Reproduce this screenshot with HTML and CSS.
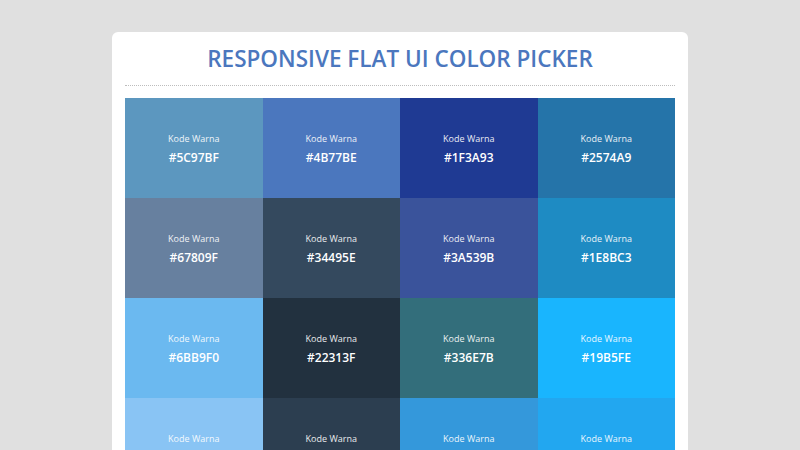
FILE: index.html
```html
<!DOCTYPE html>
<html lang="en">

<head>
    <meta charset="UTF-8">
    <meta name="viewport" content="width=device-width, initial-scale=1.0">
    <title>Flat UI Color Picker</title>

    <link rel="stylesheet" href="styles.css">

</head>

<body>
    <main class="card">
        <h1>Responsive Flat UI Color Picker</h1>

        <div class="colors">
            <div class="color c-5c97bf"><p class="label">Kode Warna</p><p class="hex">#5C97BF</p></div>
            <div class="color c-4b77be"><p class="label">Kode Warna</p><p class="hex">#4B77BE</p></div>
            <div class="color c-1f3a93"><p class="label">Kode Warna</p><p class="hex">#1F3A93</p></div>
            <div class="color c-2574a9"><p class="label">Kode Warna</p><p class="hex">#2574A9</p></div>

            <div class="color c-67809f"><p class="label">Kode Warna</p><p class="hex">#67809F</p></div>
            <div class="color c-34495e"><p class="label">Kode Warna</p><p class="hex">#34495E</p></div>
            <div class="color c-3a539b"><p class="label">Kode Warna</p><p class="hex">#3A539B</p></div>
            <div class="color c-1e8bc3"><p class="label">Kode Warna</p><p class="hex">#1E8BC3</p></div>

            <div class="color c-6bb9f0"><p class="label">Kode Warna</p><p class="hex">#6BB9F0</p></div>
            <div class="color c-22313f"><p class="label">Kode Warna</p><p class="hex">#22313F</p></div>
            <div class="color c-336e7b"><p class="label">Kode Warna</p><p class="hex">#336E7B</p></div>
            <div class="color c-19b5fe"><p class="label">Kode Warna</p><p class="hex">#19B5FE</p></div>

            <div class="color c-89c4f4"><p class="label">Kode Warna</p><p class="hex">#89C4F4</p></div>
            <div class="color c-2c3e50"><p class="label">Kode Warna</p><p class="hex">#2C3E50</p></div>
            <div class="color c-3498db"><p class="label">Kode Warna</p><p class="hex">#3498DB</p></div>
            <div class="color c-22a7f0"><p class="label">Kode Warna</p><p class="hex">#22A7F0</p></div>
        </div>
    </main>
</body>

</html>
```

FILE: styles.css
```css
* {
    margin: 0;
    padding: 0;
    box-sizing: border-box;
}

body {
    background-color: #e0e0e0;
    font-family: 'Open Sans', sans-serif;
    padding-top: 32px;
}

.card {
    width: 576px;
    margin-left: 112px;
    background-color: #fff;
    border-radius: 6px;
    padding: 0 13px;
}

h1 {
    text-align: center;
    text-transform: uppercase;
    color: #4b77be;
    font-size: 22.5px;
    font-weight: 600;
    line-height: 30px;
    padding: 12px 0 11px;
    margin-bottom: 12px;
    border-bottom: 1px dotted #bdbdbd;
}

.colors {
    display: grid;
    grid-template-columns: repeat(4, 1fr);
}

.color {
    height: 100px;
    padding-top: 3px;
    display: flex;
    flex-direction: column;
    justify-content: center;
    align-items: center;
    color: #fff;
    text-align: center;
}

.label {
    font-size: 9px;
    line-height: 12px;
    opacity: 0.9;
    margin-bottom: 5px;
}

.hex {
    font-size: 12px;
    font-weight: 600;
    line-height: 16px;
}

.c-5c97bf { background-color: #5c97bf; }
.c-4b77be { background-color: #4b77be; }
.c-1f3a93 { background-color: #1f3a93; }
.c-2574a9 { background-color: #2574a9; }
.c-67809f { background-color: #67809f; }
.c-34495e { background-color: #34495e; }
.c-3a539b { background-color: #3a539b; }
.c-1e8bc3 { background-color: #1e8bc3; }
.c-6bb9f0 { background-color: #6bb9f0; }
.c-22313f { background-color: #22313f; }
.c-336e7b { background-color: #336e7b; }
.c-19b5fe { background-color: #19b5fe; }
.c-89c4f4 { background-color: #89c4f4; }
.c-2c3e50 { background-color: #2c3e50; }
.c-3498db { background-color: #3498db; }
.c-22a7f0 { background-color: #22a7f0; }
```
